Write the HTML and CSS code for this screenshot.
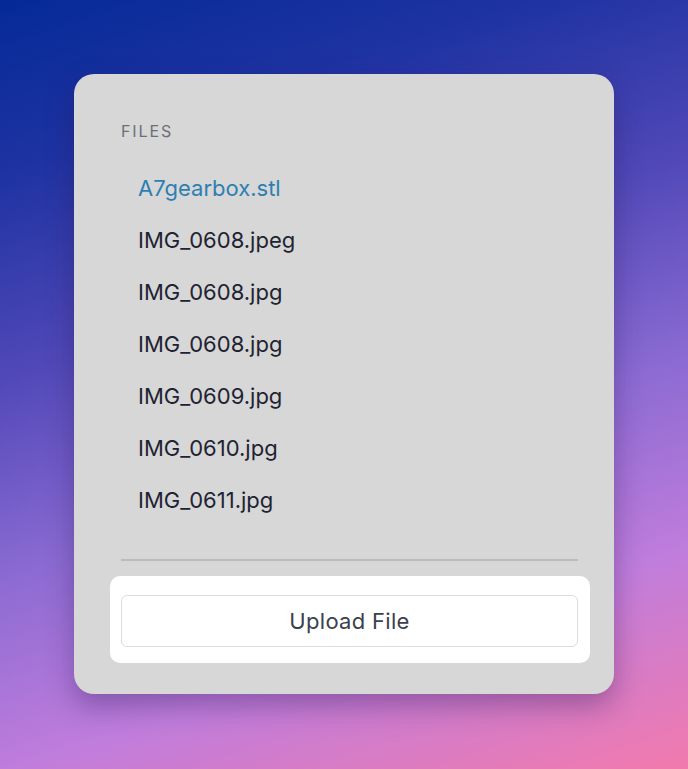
FILE: index.html
```html
<!DOCTYPE html>
<html lang="en">
<head>
<meta charset="utf-8">
<title>Files</title>
<link rel="stylesheet" href="styles.css">
</head>
<body>
<div class="stage">
  <div class="card">
    <div class="label">FILES</div>
    <ul class="files">
      <li class="file active">A7gearbox.stl</li>
      <li class="file">IMG_0608.jpeg</li>
      <li class="file">IMG_0608.jpg</li>
      <li class="file">IMG_0608.jpg</li>
      <li class="file">IMG_0609.jpg</li>
      <li class="file">IMG_0610.jpg</li>
      <li class="file">IMG_0611.jpg</li>
    </ul>
    <div class="divider"></div>
    <div class="upload-box">
      <button class="upload">Upload File</button>
    </div>
  </div>
</div>
</body>
</html>
```
FILE: styles.css
```css
html, body {
  margin: 0;
  padding: 0;
}
body {
  width: 688px;
  height: 769px;
  overflow: hidden;
  font-family: Inter, "Liberation Sans", sans-serif;
  background: linear-gradient(162deg, #042a98 0%, #1f33a2 18%, #5048b8 38%, #8a6ad2 58%, #c07ddc 78%, #f27aac 100%);
}
.stage {
  padding: 74px 0 0 74px;
}
.card {
  width: 540px;
  height: 620px;
  box-sizing: border-box;
  background: #d7d7d7;
  border-radius: 20px;
  box-shadow: 0 12px 28px rgba(40, 20, 80, 0.35);
  padding: 47px 36px 0 47px;
  display: flex;
  flex-direction: column;
}
.label {
  font-size: 16px;
  line-height: 20px;
  letter-spacing: 1.9px;
  color: #6c6f78;
  height: 20px;
}
.files {
  list-style: none;
  margin: 21px 0 0 0;
  padding: 0 0 0 17px;
}
.file {
  font-size: 22px;
  line-height: 52px;
  height: 52px;
  color: #1e2332;
}
.file.active {
  color: #2d7fb2;
}
.divider {
  margin-top: 33px;
  width: 457px;
  height: 2px;
  background: #bcbcbc;
}
.upload-box {
  margin: 15px 0 0 -11px;
  width: 480px;
  height: 87px;
  box-sizing: border-box;
  background: #ffffff;
  border-radius: 10px;
  padding: 19px 12px 0 11px;
}
.upload {
  display: block;
  width: 457px;
  height: 52px;
  box-sizing: border-box;
  background: #ffffff;
  border: 1px solid #dcdcdc;
  border-radius: 6px;
  font-family: inherit;
  font-size: 22px;
  letter-spacing: 0.3px;
  color: #3b404d;
  padding: 0;
}
```
